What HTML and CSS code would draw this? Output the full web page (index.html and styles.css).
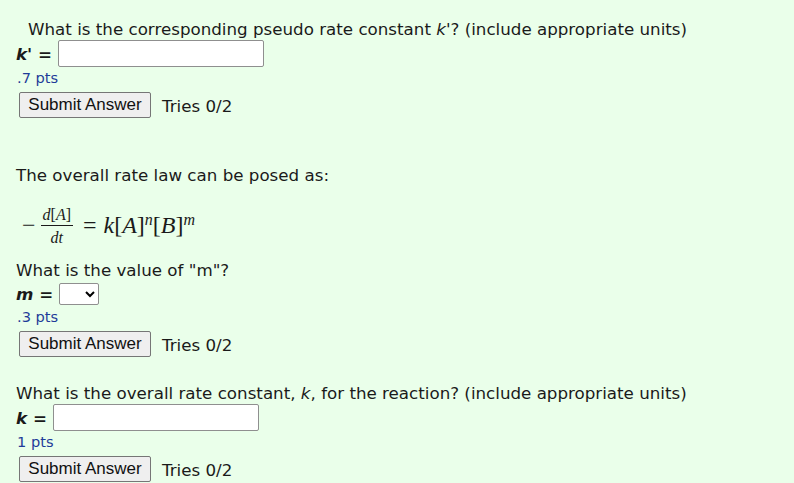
FILE: index.html
```html
<!DOCTYPE html>
<html>
<head>
<meta charset="utf-8">
<link rel="stylesheet" href="styles.css">
</head>
<body>
<div class="page">
  <section class="q q1">
    <p class="prompt indent">What is the corresponding pseudo rate constant <i>k'</i>? (include appropriate units)</p>
    <div class="answer"><b class="lbl"><i>k'</i> =</b><input class="field" type="text"></div>
    <div class="pts">.7 pts</div>
    <div class="submit"><button class="btn">Submit Answer</button><span class="tries">Tries 0/2</span></div>
  </section>

  <section class="q q2">
    <p class="prompt">The overall rate law can be posed as:</p>
    <div class="math">
      <span class="minus">−</span>
      <span class="frac"><span class="num"><i>d</i>[<i>A</i>]</span><span class="den"><i>dt</i></span></span>
      <span class="eq">=</span>
      <span class="rhs"><i>k</i>[<i>A</i>]<sup><i>n</i></sup>[<i>B</i>]<sup><i>m</i></sup></span>
    </div>
    <p class="prompt">What is the value of "m"?</p>
    <div class="answer sel"><b class="lbl"><i>m</i> =</b><select class="choice"><option></option><option>0</option><option>1</option><option>2</option></select></div>
    <div class="pts sel-pts">.3 pts</div>
    <div class="submit"><button class="btn">Submit Answer</button><span class="tries">Tries 0/2</span></div>
  </section>

  <section class="q q3">
    <p class="prompt">What is the overall rate constant, <i>k</i>, for the reaction? (include appropriate units)</p>
    <div class="answer"><b class="lbl"><i>k</i> =</b><input class="field" type="text"></div>
    <div class="pts">1 pts</div>
    <div class="submit"><button class="btn">Submit Answer</button><span class="tries">Tries 0/2</span></div>
  </section>
</div>
</body>
</html>
```
FILE: styles.css
```css
html, body {
  margin: 0;
  padding: 0;
  background: #eaffea;
}
body {
  font-family: "DejaVu Sans", Verdana, sans-serif;
  font-size: 16.7px;
  color: #1a1a1a;
}
.page {
  padding: 19px 0 0 16px;
  display: flex;
  flex-direction: column;
}
.q {
  display: flex;
  flex-direction: column;
  align-items: flex-start;
}
.prompt {
  margin: 0;
  line-height: 20px;
  height: 20px;
}
.indent {
  padding-left: 12px;
}
.answer {
  display: flex;
  align-items: center;
  margin-top: 1px;
}
.lbl {
  font-weight: bold;
  margin-right: 6px;
}
.field {
  width: 206px;
  height: 27px;
  box-sizing: border-box;
  border: 1px solid #8f8f8f;
  border-radius: 2px;
  background: #fff;
  margin: 0;
  padding: 0 4px;
}
.pts {
  font-family: "DejaVu Sans", Verdana, sans-serif;
  font-size: 14.6px;
  line-height: 16px;
  color: #1f3c99;
  margin-top: 3px;
  padding-left: 1px;
}
.sel-pts {
  margin-top: 4px;
}
.submit {
  display: flex;
  align-items: center;
  margin-top: 6px;
  padding-left: 3px;
}
.btn {
  font-family: "Liberation Sans", Arial, sans-serif;
  font-size: 17px;
  color: #111;
  height: 26px;
  width: 132px;
  padding: 0;
  background: #efefef;
  border: 1px solid #767676;
  border-radius: 2px;
  margin: 0;
}
.tries {
  margin-left: 11px;
  padding-top: 2px;
}
.q2 {
  margin-top: 47px;
}
.math {
  display: flex;
  align-items: center;
  font-family: "Liberation Serif", "Times New Roman", serif;
  font-size: 24px;
  height: 52px;
  margin: 14px 0 9px 6px;
}
.minus {
  margin-right: 5px;
}
.frac {
  display: inline-flex;
  flex-direction: column;
  align-items: center;
  font-size: 16px;
  line-height: 17px;
  margin-top: 1px;
}
.num {
  border-bottom: 1px solid #1a1a1a;
  padding: 0 2px 2px;
}
.den {
  padding-top: 3px;
}
.eq {
  margin: 0 7px 0 10px;
}
.rhs sup {
  font-size: 16px;
  vertical-align: 8px;
  line-height: 0;
}
.sel {
  margin-top: 3px;
}
.choice {
  width: 40px;
  height: 22px;
  margin: 0;
  border: 1px solid #8f8f8f;
  border-radius: 2px;
  background: #fff;
}
.q3 {
  margin-top: 26px;
}
```
